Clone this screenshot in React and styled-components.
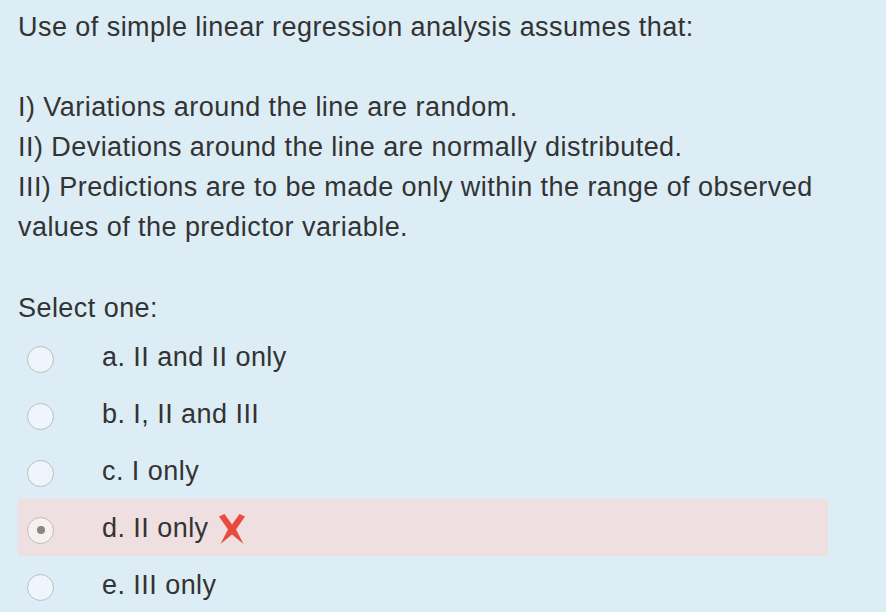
import styled, { createGlobalStyle } from "styled-components";

const GlobalStyle = createGlobalStyle`
  html, body {
    margin: 0;
    padding: 0;
    background: #dcedf5;
  }
  body {
    font-family: "Liberation Sans", Arial, sans-serif;
    color: #333;
  }
`;

const options = [
  { id: "a", label: "a. II and II only" },
  { id: "b", label: "b. I, II and III" },
  { id: "c", label: "c. I only" },
  { id: "d", label: "d. II only", checked: true, wrong: true },
  { id: "e", label: "e. III only" },
];

function CrossMark() {
  return (
    <Cross viewBox="0 0 26 30" width="26" height="30">
      <path
        d="M0 2.5 L5.5 0 L13 10.5 L20.5 0 L26 2.5 L17 15.5 L24.5 30 L13 20.5 L1.5 30 L9 15.5 Z"
        fill="#e74c3c"
      />
    </Cross>
  );
}

function App() {
  return (
    <>
      <GlobalStyle />
      <Wrapper>
        <Question>
          <Line>Use of simple linear regression analysis assumes that:</Line>
          <Line>&nbsp;</Line>
          <Line>I) Variations around the line are random.</Line>
          <Line>II) Deviations around the line are normally distributed.</Line>
          <Line>III) Predictions are to be made only within the range of observed</Line>
          <Line>values of the predictor variable.</Line>
          <Line>&nbsp;</Line>
        </Question>
        <Prompt>Select one:</Prompt>
        <Answers>
          {options.map((o) => (
            <Option key={o.id} $wrong={o.wrong}>
              <Radio $checked={o.checked} />
              <Label>{o.label}</Label>
              {o.wrong && <CrossMark />}
            </Option>
          ))}
        </Answers>
      </Wrapper>
    </>
  );
}

const Wrapper = styled.div`
  width: 810px;
  padding: 7px 0 0 18px;
  font-size: 27px;
  letter-spacing: 0.45px;
`;

const Question = styled.div`
  display: flex;
  flex-direction: column;
`;

const Line = styled.div`
  line-height: 40px;
  height: 40px;
  white-space: nowrap;
`;

const Prompt = styled.div`
  line-height: 40px;
  height: 40px;
  margin-top: 1px;
`;

const Answers = styled.div`
  display: flex;
  flex-direction: column;
`;

const Option = styled.div`
  display: flex;
  align-items: center;
  height: 57px;
  background: ${(p) => (p.$wrong ? "#efdfe0" : "transparent")};
`;

const Radio = styled.span`
  box-sizing: border-box;
  width: 27px;
  height: 27px;
  margin: 5px 0 0 9px;
  border-radius: 50%;
  border: 1px solid #bdbdbd;
  background: ${(p) => (p.$checked ? "#f6f0f0" : "#eef5fc")};
  display: flex;
  align-items: center;
  justify-content: center;

  &::after {
    content: "";
    display: ${(p) => (p.$checked ? "block" : "none")};
    width: 8px;
    height: 8px;
    border-radius: 50%;
    background: #8a8585;
  }
`;

const Label = styled.span`
  margin-left: 48px;
  margin-top: 2px;
`;

const Cross = styled.svg`
  margin-left: 10px;
  margin-top: 2px;
`;

export default App;
